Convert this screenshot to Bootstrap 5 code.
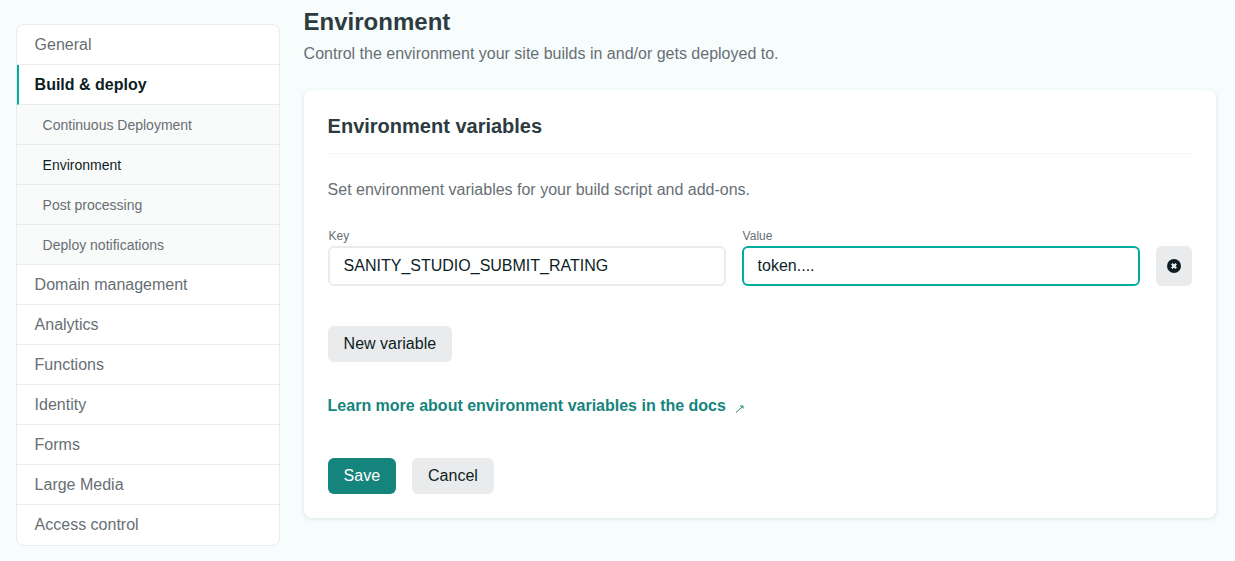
<!DOCTYPE html>
<html lang="en">
<head>
<meta charset="utf-8">
<title>Environment</title>
<link href="https://cdn.jsdelivr.net/npm/bootstrap@5.3.0/dist/css/bootstrap.min.css" rel="stylesheet">
<style>
html,body{height:561px;overflow:hidden}
body{background:#f7fdfd;font-family:"Liberation Sans",Arial,sans-serif;font-size:16px;color:#0e1e25}
.shell{padding:0 19px 0 16px;gap:24px}
.side{width:263.6px;flex:none;margin-top:24px;border:1px solid #e9ebed;border-radius:8px;background:#fff;overflow:hidden;height:522px}
.side-item{display:block;height:40px;line-height:39px;padding-left:17.6px;color:#686f74;text-decoration:none;border-bottom:1px solid #e9ebed;font-size:16px}
.side-item:last-child{border-bottom:0}
.side-item.on{font-weight:700;color:#0e1e25;border-left:2px solid #00ad9f;padding-left:15.6px}
.side-sub{background:#f9fafa;font-size:14px;line-height:41px;padding-left:25.6px}
.side-sub.on-sub{color:#0e1e25}
.mainc{flex:1;min-width:0;padding-top:7px}
.ttl{font-size:24px;line-height:30px;font-weight:700;color:#2d3b41;margin:0}
.subt{margin:9px 0 0;line-height:16px;height:44px;color:#686f74}
.panel{background:#fff;border-radius:8px;box-shadow:0 1px 4px rgba(14,30,37,.12);padding:24px;height:428px}
.panel-h{font-size:20px;line-height:24px;font-weight:700;color:#2d3b41;margin:0;padding-bottom:15px;border-bottom:1px solid #f4f5f6;height:40px}
.panel-d{margin:27px 0 0;line-height:18px;color:#686f74}
.flds{margin-top:30px;gap:16px}
.fld{width:398px}
.fld-l{display:block;font-size:12px;line-height:14px;color:#686f74;margin:0 0 3px 1px}
.fld-i{height:40px;border:2px solid #e9ebed;border-radius:6px;padding:0 14px;font-size:16px;color:#0e1e25;box-shadow:none}
.fld-i.foc,.fld-i.foc:focus{border-color:#00ad9f;box-shadow:none}
.gbtn{background:#e9ebed;color:#0e1e25;border:0;border-radius:6px;height:36px;padding:0 16px;font-size:16px;line-height:36px}
.gbtn:hover{background:#e9ebed;color:#0e1e25}
.xbtn{width:36px;height:40px;padding:0;align-self:flex-end}
.xbtn svg{display:block;margin:auto}
.newv{margin-top:40px}
.doc{margin-top:35px;line-height:18px}
.doc a{color:#15847d;font-weight:700;text-decoration:none}
.doc svg{margin-left:9px;vertical-align:-2px}
.acts{margin-top:43px;gap:16px}
.sbtn{background:#15847d;color:#fff}
.sbtn:hover{background:#15847d;color:#fff}
</style>
</head>
<body>
<div class="d-flex align-items-start shell">
  <nav class="side">
    <a class="side-item" href="#">General</a>
    <a class="side-item on" href="#">Build &amp; deploy</a>
    <a class="side-item side-sub" href="#">Continuous Deployment</a>
    <a class="side-item side-sub on-sub" href="#">Environment</a>
    <a class="side-item side-sub" href="#">Post processing</a>
    <a class="side-item side-sub" href="#">Deploy notifications</a>
    <a class="side-item" href="#">Domain management</a>
    <a class="side-item" href="#">Analytics</a>
    <a class="side-item" href="#">Functions</a>
    <a class="side-item" href="#">Identity</a>
    <a class="side-item" href="#">Forms</a>
    <a class="side-item" href="#">Large Media</a>
    <a class="side-item" href="#">Access control</a>
  </nav>
  <main class="mainc">
    <h1 class="ttl">Environment</h1>
    <p class="subt">Control the environment your site builds in and/or gets deployed to.</p>
    <section class="panel">
      <h2 class="panel-h">Environment variables</h2>
      <p class="panel-d">Set environment variables for your build script and add-ons.</p>
      <div class="d-flex flds">
        <div class="fld">
          <label class="fld-l" for="k">Key</label>
          <input id="k" class="form-control fld-i" value="SANITY_STUDIO_SUBMIT_RATING">
        </div>
        <div class="fld">
          <label class="fld-l" for="v">Value</label>
          <input id="v" class="form-control fld-i foc" value="token....">
        </div>
        <button class="btn gbtn xbtn" type="button" aria-label="Remove">
          <svg width="14" height="14" viewBox="0 0 14 14"><circle cx="7" cy="7" r="7" fill="#0e1e25"/><path d="M4.8 4.8l4.4 4.4M9.2 4.8l-4.4 4.4" stroke="#f1f2f3" stroke-width="2.2"/></svg>
        </button>
      </div>
      <div class="newv"><button class="btn gbtn" type="button">New variable</button></div>
      <div class="doc"><a href="#">Learn more about environment variables in the docs<svg width="9" height="8" viewBox="0 0 9 8"><path d="M1 7.5L8 1.2M5 1h3v2.6" fill="none" stroke="#15847d" stroke-width="1"/></svg></a></div>
      <div class="d-flex acts">
        <button class="btn gbtn sbtn" type="button">Save</button>
        <button class="btn gbtn" type="button">Cancel</button>
      </div>
    </section>
  </main>
</div>
</body>
</html>
